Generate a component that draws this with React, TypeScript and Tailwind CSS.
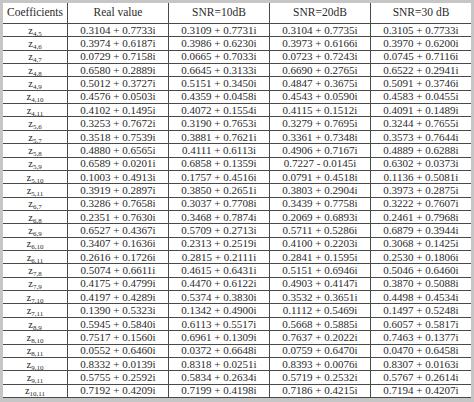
import React from 'react';

type Row = { i: string; j: string; values: string[] };

const rows: Row[] = [
  { i: '4', j: '5', values: ['0.3104 + 0.7733i', '0.3109 + 0.7731i', '0.3104 + 0.7735i', '0.3105 + 0.7733i'] },
  { i: '4', j: '6', values: ['0.3974 + 0.6187i', '0.3986 + 0.6230i', '0.3973 + 0.6166i', '0.3970 + 0.6200i'] },
  { i: '4', j: '7', values: ['0.0729 + 0.7158i', '0.0665 + 0.7033i', '0.0723 + 0.7243i', '0.0745 + 0.7116i'] },
  { i: '4', j: '8', values: ['0.6580 + 0.2889i', '0.6645 + 0.3133i', '0.6690 + 0.2765i', '0.6522 + 0.2941i'] },
  { i: '4', j: '9', values: ['0.5012 + 0.3727i', '0.5151 + 0.3450i', '0.4847 + 0.3675i', '0.5091 + 0.3746i'] },
  { i: '4', j: '10', values: ['0.4576 + 0.0503i', '0.4359 + 0.0458i', '0.4543 + 0.0590i', '0.4583 + 0.0455i'] },
  { i: '4', j: '11', values: ['0.4102 + 0.1495i', '0.4072 + 0.1554i', '0.4115 + 0.1512i', '0.4091 + 0.1489i'] },
  { i: '5', j: '6', values: ['0.3253 + 0.7672i', '0.3190 + 0.7653i', '0.3279 + 0.7695i', '0.3244 + 0.7655i'] },
  { i: '5', j: '7', values: ['0.3518 + 0.7539i', '0.3881 + 0.7621i', '0.3361 + 0.7348i', '0.3573 + 0.7644i'] },
  { i: '5', j: '8', values: ['0.4880 + 0.6565i', '0.4111 + 0.6113i', '0.4906 + 0.7167i', '0.4889 + 0.6288i'] },
  { i: '5', j: '9', values: ['0.6589 + 0.0201i', '0.6858 + 0.1359i', '0.7227 - 0.0145i', '0.6302 + 0.0373i'] },
  { i: '5', j: '10', values: ['0.1003 + 0.4913i', '0.1757 + 0.4516i', '0.0791 + 0.4518i', '0.1136 + 0.5081i'] },
  { i: '5', j: '11', values: ['0.3919 + 0.2897i', '0.3850 + 0.2651i', '0.3803 + 0.2904i', '0.3973 + 0.2875i'] },
  { i: '6', j: '7', values: ['0.3286 + 0.7658i', '0.3037 + 0.7708i', '0.3439 + 0.7758i', '0.3222 + 0.7607i'] },
  { i: '6', j: '8', values: ['0.2351 + 0.7630i', '0.3468 + 0.7874i', '0.2069 + 0.6893i', '0.2461 + 0.7968i'] },
  { i: '6', j: '9', values: ['0.6527 + 0.4367i', '0.5709 + 0.2713i', '0.5711 + 0.5286i', '0.6879 + 0.3944i'] },
  { i: '6', j: '10', values: ['0.3407 + 0.1636i', '0.2313 + 0.2519i', '0.4100 + 0.2203i', '0.3068 + 0.1425i'] },
  { i: '6', j: '11', values: ['0.2616 + 0.1726i', '0.2815 + 0.2111i', '0.2841 + 0.1595i', '0.2530 + 0.1806i'] },
  { i: '7', j: '8', values: ['0.5074 + 0.6611i', '0.4615 + 0.6431i', '0.5151 + 0.6946i', '0.5046 + 0.6460i'] },
  { i: '7', j: '9', values: ['0.4175 + 0.4799i', '0.4470 + 0.6122i', '0.4903 + 0.4147i', '0.3870 + 0.5088i'] },
  { i: '7', j: '10', values: ['0.4197 + 0.4289i', '0.5374 + 0.3830i', '0.3532 + 0.3651i', '0.4498 + 0.4534i'] },
  { i: '7', j: '11', values: ['0.1390 + 0.5323i', '0.1342 + 0.4900i', '0.1112 + 0.5469i', '0.1497 + 0.5248i'] },
  { i: '8', j: '9', values: ['0.5945 + 0.5840i', '0.6113 + 0.5517i', '0.5668 + 0.5885i', '0.6057 + 0.5817i'] },
  { i: '8', j: '10', values: ['0.7517 + 0.1560i', '0.6961 + 0.1309i', '0.7637 + 0.2022i', '0.7463 + 0.1377i'] },
  { i: '8', j: '11', values: ['0.0552 + 0.6460i', '0.0372 + 0.6648i', '0.0759 + 0.6470i', '0.0470 + 0.6458i'] },
  { i: '9', j: '10', values: ['0.8332 + 0.0139i', '0.8318 + 0.0251i', '0.8393 + 0.0076i', '0.8307 + 0.0163i'] },
  { i: '9', j: '11', values: ['0.5755 + 0.2592i', '0.5834 + 0.2634i', '0.5719 + 0.2532i', '0.5767 + 0.2614i'] },
  { i: '10', j: '11', values: ['0.7192 + 0.4209i', '0.7199 + 0.4198i', '0.7186 + 0.4215i', '0.7194 + 0.4207i'] },
];

const headers = ['Coefficients', 'Real value', 'SNR=10dB', 'SNR=20dB', 'SNR=30 dB'];

const gridCols = 'grid grid-cols-[65px_101px_101px_101px_1fr]';

export default function App() {
  return (
    <div
      className="w-[474px] h-[402px] bg-[#c6c6c6] pt-[3px] pl-[3px] pr-[3px] pb-[4px] text-[#2a2a2a]"
      style={{ fontFamily: '"Liberation Serif", "Times New Roman", serif' }}
    >
      <div className="flex flex-col h-full bg-white">
        <div className={`${gridCols} h-[21px] border-b border-[#4a4a4a]`}>
          {headers.map((h, k) => (
            <div
              key={h}
              className={`flex items-center justify-center text-[11.5px] ${k < 4 ? 'border-r border-[#4a4a4a]' : ''}`}
            >
              {h}
            </div>
          ))}
        </div>
        <div className="flex-1 min-h-0 grid grid-rows-[repeat(28,minmax(0,1fr))]">
          {rows.map((r) => (
            <div key={r.i + r.j} className={`${gridCols} min-h-0 overflow-hidden border-b border-[#4a4a4a]`}>
              <div className="flex items-center justify-center border-r border-[#4a4a4a] text-[10.5px]">
                <div className="flex items-end mx-auto h-[11px] leading-[11px]">
                  <span className="leading-[11px]">z</span>
                  <span className="text-[7px] leading-[7px] translate-y-[2px]">
                    {r.i},{r.j}
                  </span>
                </div>
              </div>
              {r.values.map((v, k) => (
                <div
                  key={k}
                  className={`flex items-center justify-center text-[11px] leading-none whitespace-nowrap ${k < 3 ? 'border-r border-[#4a4a4a]' : ''}`}
                >
                  {v}
                </div>
              ))}
            </div>
          ))}
        </div>
      </div>
    </div>
  );
}
